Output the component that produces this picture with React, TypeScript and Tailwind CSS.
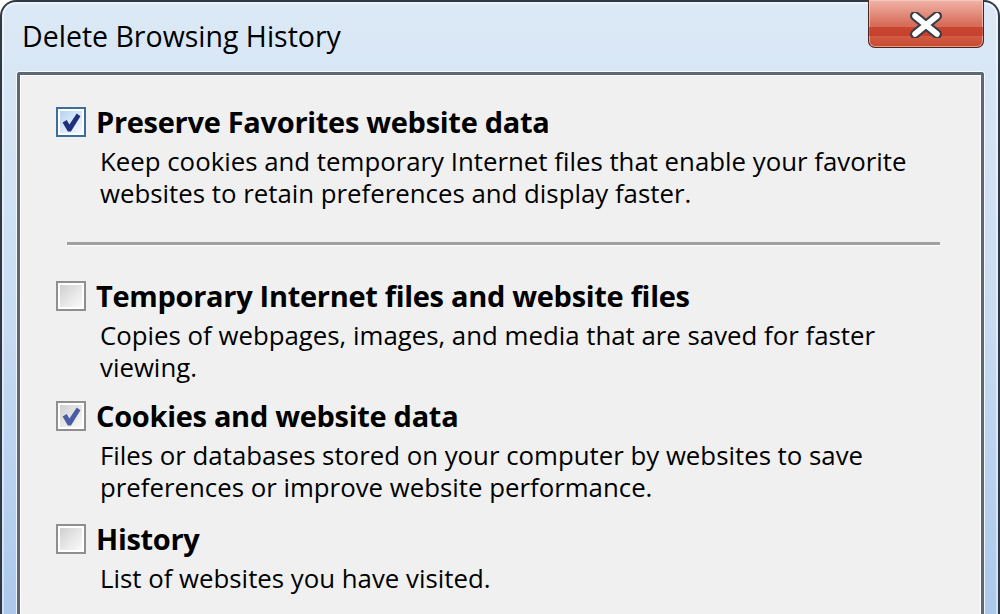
import type { ReactNode } from 'react';

function CheckMark({ color }: { color: string }) {
    return (
        <svg width="21" height="21" viewBox="0 0 20 20" className="block">
            <path d="M1.5 10 L5.5 7.5 L8 12 L15 1.5 L18.5 4 L9.5 18.5 L6.5 18.5 Z" fill={color} />
        </svg>
    );
}

function Checkbox({ checked, hover }: { checked?: boolean; hover?: boolean }) {
    const fill = hover
        ? 'bg-gradient-to-br from-[#b7d2ef] via-[#d9e8f8] to-[#f2f8fe]'
        : 'bg-gradient-to-br from-[#cfcfcf] via-[#e6e6e6] to-[#fafafa]';
    const frame = hover ? 'border-[#3d6d99]' : 'border-[#8e8f8f]';
    return (
        <div className={`w-[30px] h-[30px] shrink-0 border-2 ${frame} bg-white p-[2px]`}>
            <div className={`w-full h-full ${fill} flex items-center justify-center`}>
                {checked && <CheckMark color={hover ? '#1f2f7a' : '#4a5ca3'} />}
            </div>
        </div>
    );
}

function Option({
    checked,
    hover,
    title,
    children,
    className = '',
}: {
    checked?: boolean;
    hover?: boolean;
    title: string;
    children: ReactNode;
    className?: string;
}) {
    return (
        <div className={className}>
            <div className="flex items-center h-[32px]">
                <Checkbox checked={checked} hover={hover} />
                <span className="ml-[10px] text-[29px] font-bold leading-[32px] tracking-[-0.3px]">{title}</span>
            </div>
            <p className="ml-[44px] mt-[7px] text-[25.8px] leading-[32px]">{children}</p>
        </div>
    );
}

function CloseButton() {
    return (
        <div className="relative w-[116px] h-[48px] -mt-[2px] rounded-b-[7px] border-[1.5px] border-t-0 border-[#4a2620] bg-gradient-to-b from-[#efb4a9] via-[#d86f5c] to-[#c9492f] shadow-[inset_0_0_0_1px_rgba(255,220,210,0.55)] flex items-center justify-center overflow-hidden">
            <div className="absolute left-0 right-0 top-[27px] h-[9px] bg-[#c02f1c] opacity-60" />
            <svg width="36" height="26" viewBox="0 0 36 26" className="relative mt-[2px]">
                <path d="M7 4 L29 22 M29 4 L7 22" stroke="#3a3e44" strokeWidth="10" strokeLinecap="round" />
                <path d="M7 4 L29 22 M29 4 L7 22" stroke="#ffffff" strokeWidth="5.5" strokeLinecap="round" />
            </svg>
        </div>
    );
}

export default function App() {
    return (
        <div className="w-[1000px] h-[614px] overflow-hidden bg-white">
            <div
                className="w-[1000px] h-[640px] rounded-t-[16px] border-2 border-b-0 border-[#2f3944] bg-gradient-to-b from-[#dce9f6] via-[#c8dcf2] to-[#a9c7eb] shadow-[inset_0_0_0_2px_rgba(255,255,255,0.45)] flex flex-col"
                style={{ fontFamily: '"Open Sans", "Noto Sans", sans-serif' }}
            >
                <div className="flex items-start h-[70px] shrink-0">
                    <span className="pl-[20px] pt-[15px] text-[28.5px] leading-[38px] text-black">
                        Delete Browsing History
                    </span>
                    <div className="ml-auto mr-[14px]">
                        <CloseButton />
                    </div>
                </div>
                <div className="ml-[15px] mr-[14px] flex-1 rounded-tl-[3px] rounded-tr-[3px] border-[3px] border-b-0 border-[#5e6873] bg-[#f0f0f0] shadow-[0_0_0_1px_rgba(255,255,255,0.8),inset_0_0_0_1px_#ffffff] pl-[36px] pt-[31px] text-black">
                    <Option checked hover title="Preserve Favorites website data">
                        Keep cookies and temporary Internet files that enable your favorite
                        <br />
                        websites to retain preferences and display faster.
                    </Option>
                    <div className="ml-[11px] mr-[41px] mt-[33px] h-[3px] bg-[#a0a0a0] shadow-[0_1px_0_#ffffff]" />
                    <Option className="mt-[35px]" title="Temporary Internet files and website files">
                        Copies of webpages, images, and media that are saved for faster
                        <br />
                        viewing.
                    </Option>
                    <Option className="mt-[17px]" checked title="Cookies and website data">
                        Files or databases stored on your computer by websites to save
                        <br />
                        preferences or improve website performance.
                    </Option>
                    <Option className="mt-[20px]" title="History">
                        List of websites you have visited.
                    </Option>
                </div>
            </div>
        </div>
    );
}
